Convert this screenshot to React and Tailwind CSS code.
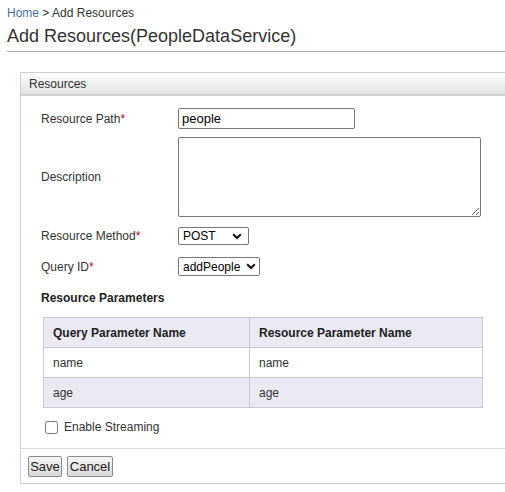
import React from "react";

const font = { fontFamily: "'Liberation Sans', Arial, sans-serif" };

function Label({ children, required }) {
  return (
    <div className="w-[137px] shrink-0 text-[12px] leading-[14px] text-[#333]">
      {children}
      {required && <span className="text-[#c0002b]">*</span>}
    </div>
  );
}

function Chevron() {
  return (
    <svg width="10" height="7" viewBox="0 0 10 7" className="shrink-0">
      <path d="M1.2 1.3 L5 5 L8.8 1.3" fill="none" stroke="#111" strokeWidth="2" />
    </svg>
  );
}

function FakeSelect({ value, width, height, pad }) {
  return (
    <div
      className={`flex items-center justify-between border border-[#767676] rounded-[2px] bg-white pl-[4px] text-[12px] leading-[14px] text-black ${width} ${height} ${pad}`}
    >
      <span>{value}</span>
      <Chevron />
    </div>
  );
}

export default function App() {
  const params = [
    { q: "name", r: "name" },
    { q: "age", r: "age" },
  ];

  return (
    <div className="w-[505px] h-[492px] bg-white pl-[7px] overflow-hidden" style={font}>
      {/* breadcrumb */}
      <div className="pt-[6px] text-[12px] leading-[14px] text-[#333]">
        <span className="text-[#4a6b99]">Home</span> &gt; Add Resources
      </div>

      {/* title */}
      <div className="mt-[5px] pb-[4px] border-b border-[#a9a9b0] text-[18px] leading-[22px] text-[#333]">
        Add Resources(PeopleDataService)
      </div>

      {/* panel */}
      <div className="mt-[20px] ml-[13px] border-l border-t border-b border-[#cfcfcf]">
        <div className="h-[23px] flex items-center pl-[8px] bg-gradient-to-b from-[#fdfdfd] to-[#e3e3e3] border-b-2 border-[#d0d0d0] text-[12px] text-[#333]">
          Resources
        </div>

        <div className="pl-[20px]">
          <div className="mt-[12px] flex items-center">
            <Label required>Resource Path</Label>
            <input
              defaultValue="people"
              className="w-[177px] h-[21px] border border-[#767676] rounded-[2px] px-[3px] text-[13px] text-black outline-none"
            />
          </div>

          <div className="mt-[8px] flex items-center">
            <Label>Description</Label>
            <textarea className="w-[303px] h-[80px] border border-[#767676] rounded-[2px] outline-none block" />
          </div>

          <div className="mt-[10px] flex items-center">
            <Label required>Resource Method</Label>
            <FakeSelect value="POST" width="w-[71px]" height="h-[18px]" pad="pr-[6px]" />
          </div>

          <div className="mt-[12px] flex items-center">
            <Label required>Query ID</Label>
            <FakeSelect value="addPeople" width="w-[82px]" height="h-[19px]" pad="pr-[3px]" />
          </div>

          <div className="mt-[15px] text-[12px] leading-[14px] font-bold text-[#222]">
            Resource Parameters
          </div>

          <table className="mt-[12px] ml-[2px] w-[440px] border-collapse text-[12px] text-[#333]">
            <thead>
              <tr className="bg-[#ebe9f4] h-[30px]">
                <th className="w-[206px] border border-[#c9c9cf] pl-[9px] text-left font-bold text-[#222]">
                  Query Parameter Name
                </th>
                <th className="border border-[#c9c9cf] pl-[9px] text-left font-bold text-[#222]">
                  Resource Parameter Name
                </th>
              </tr>
            </thead>
            <tbody>
              {params.map((p, i) => (
                <tr key={p.q} className={`h-[30px] ${i % 2 === 1 ? "bg-[#ebe9f4]" : "bg-white"}`}>
                  <td className="border border-[#c9c9cf] pl-[9px]">{p.q}</td>
                  <td className="border border-[#c9c9cf] pl-[9px]">{p.r}</td>
                </tr>
              ))}
            </tbody>
          </table>

          <label className="mt-[12px] ml-[4px] flex items-center gap-[6px] h-[14px] text-[12px] text-[#333]">
            <input type="checkbox" className="m-0 w-[13px] h-[13px]" />
            Enable Streaming
          </label>
        </div>

        <div className="mt-[14px] border-t border-[#dcdcdc] pt-[7px] pb-[6px] pl-[7px] flex gap-[5px]">
          <button className="w-[34px] h-[21px] border border-[#8c8c8c] rounded-[2px] bg-gradient-to-b from-[#f6f6f6] to-[#dadada] text-[13px] leading-[19px] text-[#222]">
            Save
          </button>
          <button className="w-[46px] h-[21px] border border-[#8c8c8c] rounded-[2px] bg-gradient-to-b from-[#f6f6f6] to-[#dadada] text-[13px] leading-[19px] text-[#222]">
            Cancel
          </button>
        </div>
      </div>
    </div>
  );
}
